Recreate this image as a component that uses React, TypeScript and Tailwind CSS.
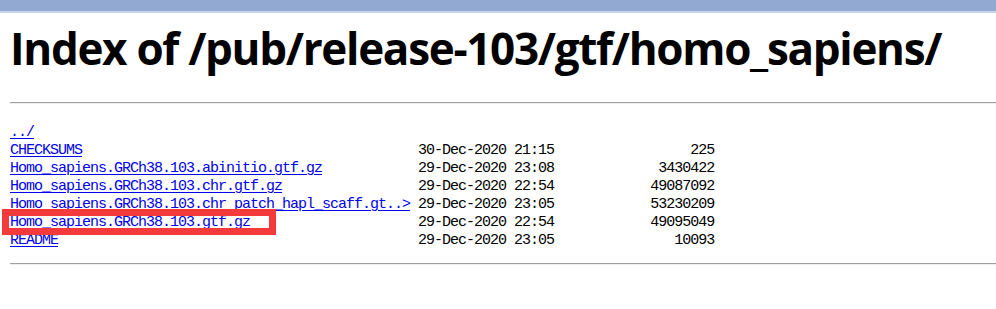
const rows = [
  { name: '../', date: '', size: '' },
  { name: 'CHECKSUMS', date: '30-Dec-2020 21:15', size: '225' },
  { name: 'Homo_sapiens.GRCh38.103.abinitio.gtf.gz', date: '29-Dec-2020 23:08', size: '3430422' },
  { name: 'Homo_sapiens.GRCh38.103.chr.gtf.gz', date: '29-Dec-2020 22:54', size: '49087092' },
  { name: 'Homo_sapiens.GRCh38.103.chr_patch_hapl_scaff.gt..>', date: '29-Dec-2020 23:05', size: '53230209' },
  { name: 'Homo_sapiens.GRCh38.103.gtf.gz', date: '29-Dec-2020 22:54', size: '49095049' },
  { name: 'README', date: '29-Dec-2020 23:05', size: '10093' },
];

function Row({ name, date, size }: { name: string; date: string; size: string }) {
  const pad = date ? ' '.repeat(Math.max(1, 51 - name.length)) : '';
  return (
    <div className="h-[18px]">
      <a href="#" className="text-[#0000ee] underline underline-offset-2">
        {name}
      </a>
      {date && (
        <span className="text-black">
          {pad}
          {date}
          {size.padStart(20, ' ')}
        </span>
      )}
    </div>
  );
}

export default function App() {
  return (
    <div className="relative min-h-screen bg-white">
      <div className="h-[13px] bg-[#92a9d1] border-b-2 border-[#c6d3ea]" />
      <div className="pl-[10px]">
        <h1 className="mt-[11px] mb-[30px] text-[44px] leading-[48px] tracking-[-1.3px] font-bold text-black whitespace-nowrap font-['Open_Sans',sans-serif]">
          Index of /pub/release-103/gtf/homo_sapiens/
        </h1>
        <div className="border-t border-b border-t-[#a0a0a0] border-b-[#eeeeee]" />
        <pre className="mt-[20px] mb-[13px] text-[15px] leading-[18px] tracking-[-1px] whitespace-pre font-['Liberation_Mono',monospace]">
          {rows.map((r) => (
            <Row key={r.name} {...r} />
          ))}
        </pre>
        <div className="border-t border-b border-t-[#a0a0a0] border-b-[#eeeeee]" />
      </div>
      {/* highlight box drawn over the listing */}
      <div className="absolute left-[2px] top-[209px] w-[274px] h-[26px] border-[7px] border-[#f43a3a]" />
    </div>
  );
}
